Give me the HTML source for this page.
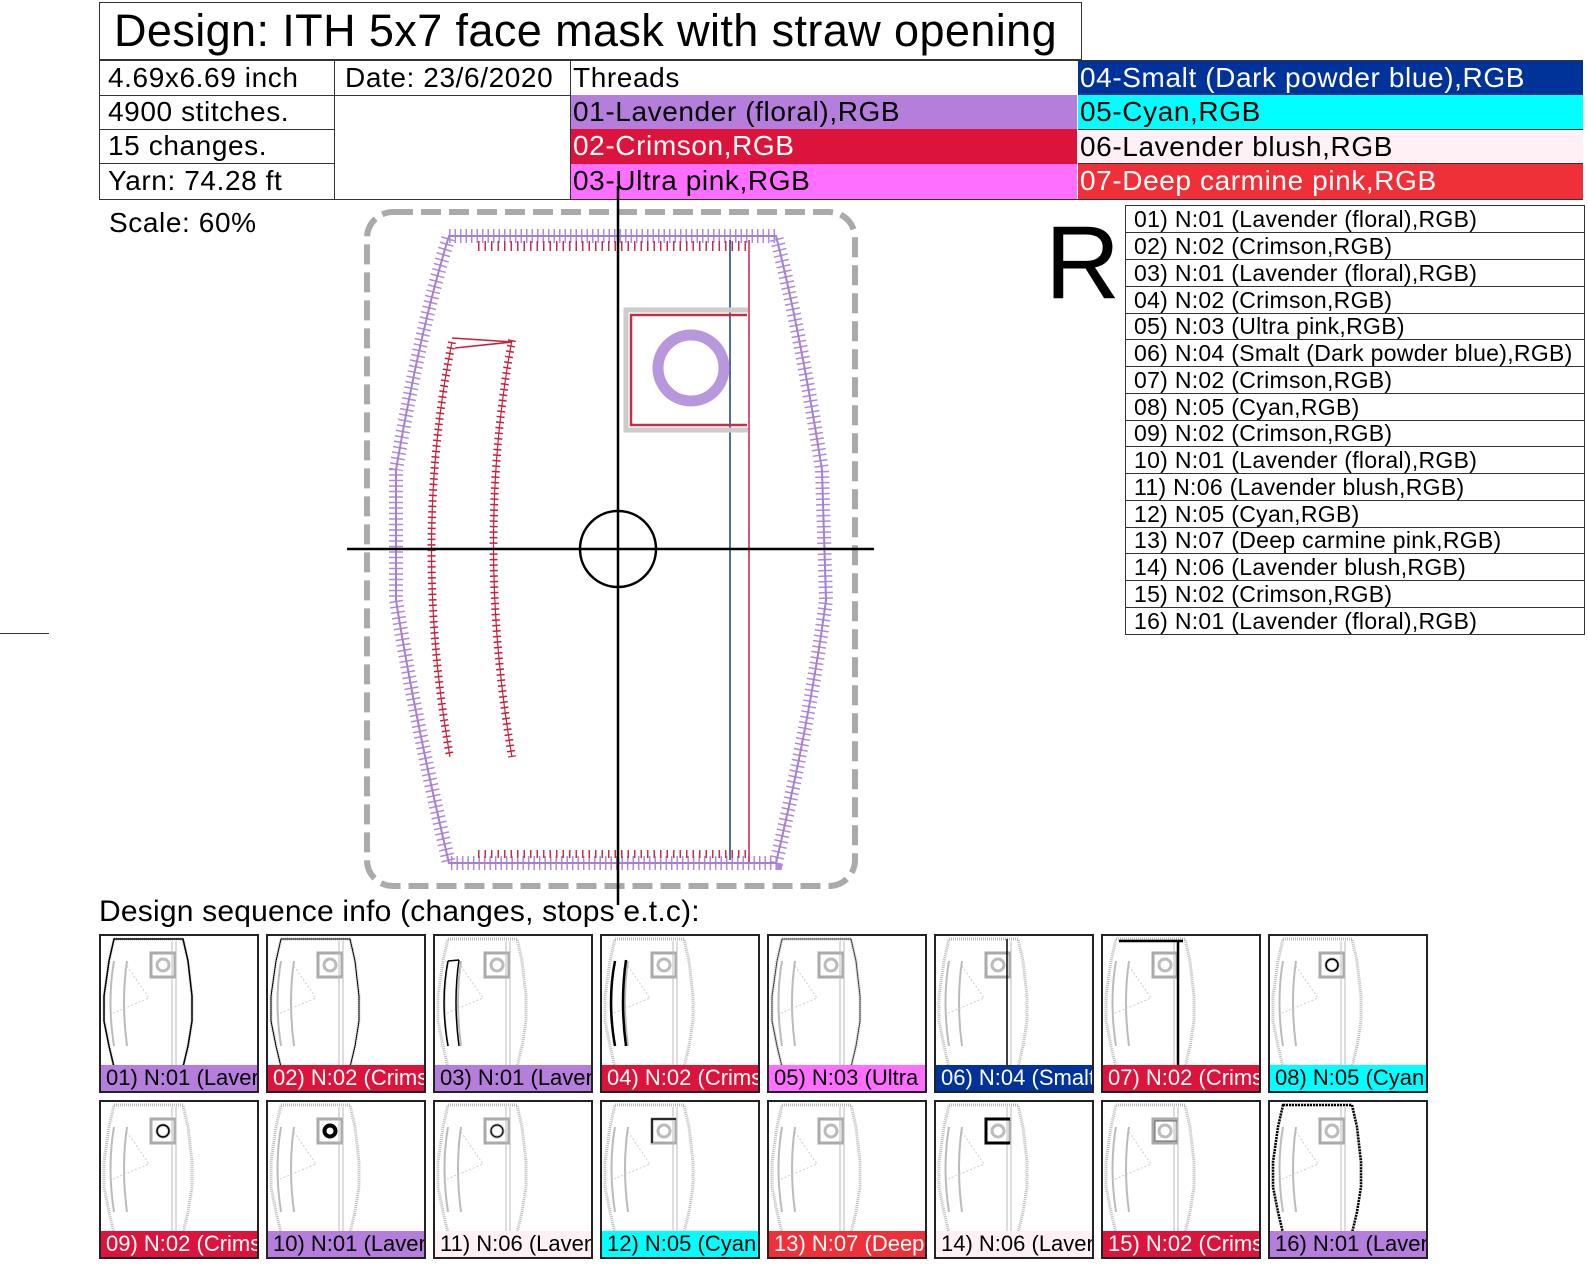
<!DOCTYPE html>
<html><head><meta charset="utf-8"><style>
body{margin:0;width:1588px;height:1270px;background:#fff;position:relative;overflow:hidden;font-family:"Liberation Sans",sans-serif;color:#000}
.a{position:absolute;box-sizing:border-box;white-space:nowrap;overflow:hidden}
.t{font-size:28px;letter-spacing:0.6px;line-height:34px;padding-left:8px}
.l{font-size:23px;letter-spacing:0.3px;line-height:26px;padding-left:8px;border:1px solid #333;border-top:none}
.th{position:absolute;width:160px;height:159px;border:2px solid #222;box-sizing:border-box;overflow:hidden}
.th svg{position:absolute;left:0;top:0}
.th .lb{position:absolute;left:0;bottom:0;width:100%;height:26px;font-size:22px;line-height:26px;padding-left:5px;white-space:nowrap;overflow:hidden;box-sizing:border-box}
</style></head><body>
<div class="a" style="left:99px;top:2px;width:983px;height:58px;border:1px solid #333;font-size:45px;letter-spacing:0.4px;line-height:56px;padding-left:14px">Design: ITH 5x7 face mask with straw opening</div>
<div class="a" style="left:99px;top:60px;width:1484px;height:140px;border:1px solid #333"></div>
<div class="a t" style="left:100px;top:61px;width:234px;border-bottom:1px solid #333">4.69x6.69 inch</div>
<div class="a t" style="left:100px;top:95px;width:234px;border-bottom:1px solid #333">4900 stitches.</div>
<div class="a t" style="left:100px;top:129px;width:234px;border-bottom:1px solid #333">15 changes.</div>
<div class="a t" style="left:100px;top:164px;width:234px">Yarn: 74.28 ft</div>
<div class="a" style="left:334px;top:60px;width:1px;height:140px;background:#333"></div>
<div class="a t" style="left:335px;top:61px;width:235px;border-bottom:1px solid #333;padding-left:10px">Date: 23/6/2020</div>
<div class="a" style="left:570px;top:60px;width:1px;height:140px;background:#333"></div>
<div class="a t" style="left:571px;top:61px;width:506px;padding-left:2px">Threads</div>
<div class="a t" style="left:571px;top:95px;width:506px;height:34px;background:#b57edc;padding-left:2px">01-Lavender (floral),RGB</div>
<div class="a t" style="left:571px;top:129px;width:506px;height:35px;background:#dc143c;color:#fff;padding-left:2px">02-Crimson,RGB</div>
<div class="a t" style="left:571px;top:164px;width:506px;height:35px;background:#ff6fff;padding-left:2px">03-Ultra pink,RGB</div>
<div class="a t" style="left:1078px;top:61px;width:505px;height:34px;background:#003399;color:#fff;padding-left:2px">04-Smalt (Dark powder blue),RGB</div>
<div class="a t" style="left:1078px;top:95px;width:505px;height:34px;background:#00ffff;padding-left:2px">05-Cyan,RGB</div>
<div class="a t" style="left:1078px;top:129px;width:505px;height:35px;background:#fff0f5;border-top:1px solid #333;border-bottom:1px solid #333;padding-left:2px">06-Lavender blush,RGB</div>
<div class="a t" style="left:1078px;top:164px;width:505px;height:35px;background:#ef3038;color:#fff;padding-left:2px">07-Deep carmine pink,RGB</div>
<div class="a" style="left:109px;top:207px;font-size:28px;letter-spacing:0.6px;line-height:32px">Scale: 60%</div>
<div class="a" style="left:1045px;top:208px;font-size:104px;line-height:110px">R</div>
<div class="a" style="left:0;top:633px;width:49px;height:1px;background:#333"></div>

<div class="a" style="left:1125px;top:205px;width:460px;height:1px;background:#333"></div>
<div class="a l" style="left:1125px;top:206px;width:460px">01) N:01 (Lavender (floral),RGB)</div>
<div class="a l" style="left:1125px;top:233px;width:460px">02) N:02 (Crimson,RGB)</div>
<div class="a l" style="left:1125px;top:260px;width:460px">03) N:01 (Lavender (floral),RGB)</div>
<div class="a l" style="left:1125px;top:287px;width:460px">04) N:02 (Crimson,RGB)</div>
<div class="a l" style="left:1125px;top:313px;width:460px">05) N:03 (Ultra pink,RGB)</div>
<div class="a l" style="left:1125px;top:340px;width:460px">06) N:04 (Smalt (Dark powder blue),RGB)</div>
<div class="a l" style="left:1125px;top:367px;width:460px">07) N:02 (Crimson,RGB)</div>
<div class="a l" style="left:1125px;top:394px;width:460px">08) N:05 (Cyan,RGB)</div>
<div class="a l" style="left:1125px;top:420px;width:460px">09) N:02 (Crimson,RGB)</div>
<div class="a l" style="left:1125px;top:447px;width:460px">10) N:01 (Lavender (floral),RGB)</div>
<div class="a l" style="left:1125px;top:474px;width:460px">11) N:06 (Lavender blush,RGB)</div>
<div class="a l" style="left:1125px;top:501px;width:460px">12) N:05 (Cyan,RGB)</div>
<div class="a l" style="left:1125px;top:527px;width:460px">13) N:07 (Deep carmine pink,RGB)</div>
<div class="a l" style="left:1125px;top:554px;width:460px">14) N:06 (Lavender blush,RGB)</div>
<div class="a l" style="left:1125px;top:581px;width:460px">15) N:02 (Crimson,RGB)</div>
<div class="a l" style="left:1125px;top:608px;width:460px">16) N:01 (Lavender (floral),RGB)</div>

<svg class="a" style="left:0;top:0" width="1588" height="1270">
<defs>
<path id="mk" d="M449 236 L776 236 Q800 330 822 470 L826 600 Q810 720 776 863 L449 863 Q415 720 396 600 L396 470 Q420 330 449 236 Z"/>
<path id="c1" d="M452 342 Q412 540 450 757"/>
<path id="c2" d="M512 340 Q475 540 512 757"/>
</defs>
<rect x="367" y="212" width="488" height="674" rx="26" fill="none" stroke="#aaa" stroke-width="6" stroke-dasharray="20 8"/>
<use href="#mk" fill="none" stroke="#b08ad8" stroke-width="14" stroke-dasharray="1.5 4"/>
<use href="#mk" fill="none" stroke="#a57ed6" stroke-width="2" transform="translate(0,0)"/>
<line x1="478" y1="246" x2="748" y2="246" stroke="#c0304a" stroke-width="10" stroke-dasharray="1.5 5"/>
<line x1="478" y1="854" x2="748" y2="854" stroke="#c0304a" stroke-width="8" stroke-dasharray="1.5 5"/>
<line x1="730" y1="240" x2="730" y2="860" stroke="#1a3a8a" stroke-width="1.5"/>
<line x1="749" y1="240" x2="749" y2="862" stroke="#d0204a" stroke-width="1.5"/>
<path d="M748 310 L626 310 L626 430 L748 430" fill="none" stroke="#ccc" stroke-width="5"/>
<path d="M747 315 L631 315 L631 425 L747 425" fill="none" stroke="#c0304a" stroke-width="2.5"/>
<circle cx="691" cy="368" r="33" fill="none" stroke="#b898dc" stroke-width="11"/>
<use href="#c1" fill="none" stroke="#c8203c" stroke-width="8" stroke-dasharray="1.5 4"/>
<use href="#c2" fill="none" stroke="#c8203c" stroke-width="8" stroke-dasharray="1.5 4"/>
<use href="#c1" fill="none" stroke="#c8203c" stroke-width="1.2"/>
<use href="#c2" fill="none" stroke="#c8203c" stroke-width="1.2"/>
<path d="M452 338 L512 342 L455 348" fill="none" stroke="#c8203c" stroke-width="1.5"/>
<line x1="347" y1="549" x2="874" y2="549" stroke="#000" stroke-width="2.5"/>
<line x1="618" y1="186" x2="618" y2="905" stroke="#000" stroke-width="2.5"/>
<circle cx="618" cy="549" r="38" fill="none" stroke="#000" stroke-width="2.5"/>
</svg>

<div class="a" style="left:99px;top:895px;font-size:30px;letter-spacing:0.2px;line-height:34px">Design sequence info (changes, stops e.t.c):</div>

<svg width="0" height="0" style="position:absolute"><defs>
<g id="tm">
<path d="M13 3 L82 3 L87 25 L91 60 L91 85 L87 110 L82 131 L13 131 L8 110 L3 85 L3 60 L8 25 Z" fill="none" stroke="#bbb" stroke-width="3" stroke-dasharray="1 1"/>
<rect x="50" y="17" width="24" height="24" fill="none" stroke="#aaa" stroke-width="3"/>
<circle cx="62" cy="29" r="6" fill="none" stroke="#bbb" stroke-width="3"/>
<line x1="71" y1="5" x2="71" y2="130" stroke="#bbb"/><line x1="75" y1="5" x2="75" y2="130" stroke="#bbb"/>
<path d="M13 25 Q6 65 13 110 M26 25 Q20 65 26 110" fill="none" stroke="#bbb" stroke-width="2"/>
<path d="M26 30 L48 62 L10 78" fill="none" stroke="#ccc" stroke-dasharray="2 2"/>
</g>
<path id="to" d="M13 3 L82 3 L87 25 L91 60 L91 85 L87 110 L82 131 L13 131 L8 110 L3 85 L3 60 L8 25 Z" fill="none"/>
</defs></svg>

<div class="th" style="left:99px;top:934px"><svg width="160" height="135"><use href="#tm"/><use href="#to" stroke="#000" stroke-width="1.5"/></svg><div class="lb" style="background:#b57edc">01) N:01 (Lavender</div></div>
<div class="th" style="left:266px;top:934px"><svg width="160" height="135"><use href="#tm"/><use href="#to" stroke="#000" stroke-width="1"/></svg><div class="lb" style="background:#dc143c;color:#fff">02) N:02 (Crimson</div></div>
<div class="th" style="left:433px;top:934px"><svg width="160" height="135"><use href="#tm"/><path d="M13 25 Q5 65 13 110 M24 24 Q18 65 24 110 M13 25 L24 24" fill="none" stroke="#000" stroke-width="1.5"/></svg><div class="lb" style="background:#b57edc">03) N:01 (Lavender</div></div>
<div class="th" style="left:600px;top:934px"><svg width="160" height="135"><use href="#tm"/><path d="M13 25 Q5 65 13 110 M24 24 Q18 65 24 110" fill="none" stroke="#000" stroke-width="2.5"/></svg><div class="lb" style="background:#dc143c;color:#fff">04) N:02 (Crimson</div></div>
<div class="th" style="left:767px;top:934px"><svg width="160" height="135"><use href="#tm"/><use href="#to" stroke="#444" stroke-width="1"/></svg><div class="lb" style="background:#ff6fff">05) N:03 (Ultra pink</div></div>
<div class="th" style="left:934px;top:934px"><svg width="160" height="135"><use href="#tm"/><line x1="71" y1="3" x2="71" y2="131" stroke="#000" stroke-width="1.5"/></svg><div class="lb" style="background:#003399;color:#fff">06) N:04 (Smalt</div></div>
<div class="th" style="left:1101px;top:934px"><svg width="160" height="135"><use href="#tm"/><path d="M16 5 L80 5 M75 5 L75 131" fill="none" stroke="#000" stroke-width="2.5"/></svg><div class="lb" style="background:#dc143c;color:#fff">07) N:02 (Crimson</div></div>
<div class="th" style="left:1268px;top:934px"><svg width="160" height="135"><use href="#tm"/><circle cx="62" cy="29" r="6" fill="none" stroke="#000" stroke-width="1.5"/></svg><div class="lb" style="background:#00ffff">08) N:05 (Cyan,RGB)</div></div>

<div class="th" style="left:99px;top:1100px"><svg width="160" height="135"><use href="#tm"/><circle cx="62" cy="29" r="6" fill="none" stroke="#000" stroke-width="1.5"/></svg><div class="lb" style="background:#dc143c;color:#fff">09) N:02 (Crimson</div></div>
<div class="th" style="left:266px;top:1100px"><svg width="160" height="135"><use href="#tm"/><circle cx="62" cy="29" r="5.5" fill="none" stroke="#000" stroke-width="4"/></svg><div class="lb" style="background:#b57edc">10) N:01 (Lavender</div></div>
<div class="th" style="left:433px;top:1100px"><svg width="160" height="135"><use href="#tm"/><circle cx="62" cy="29" r="6" fill="none" stroke="#000" stroke-width="1.2"/></svg><div class="lb" style="background:#fff0f5">11) N:06 (Lavender</div></div>
<div class="th" style="left:600px;top:1100px"><svg width="160" height="135"><use href="#tm"/><path d="M74 17 L50 17 L50 41" fill="none" stroke="#000" stroke-width="1.5"/></svg><div class="lb" style="background:#00ffff">12) N:05 (Cyan,RGB)</div></div>
<div class="th" style="left:767px;top:1100px"><svg width="160" height="135"><use href="#tm"/></svg><div class="lb" style="background:#ef3038;color:#fff">13) N:07 (Deep</div></div>
<div class="th" style="left:934px;top:1100px"><svg width="160" height="135"><use href="#tm"/><path d="M74 17 L50 17 L50 41 L74 41" fill="none" stroke="#000" stroke-width="3"/></svg><div class="lb" style="background:#fff0f5">14) N:06 (Lavender</div></div>
<div class="th" style="left:1101px;top:1100px"><svg width="160" height="135"><use href="#tm"/><path d="M74 19 L52 19 L52 39 L74 39" fill="none" stroke="#666" stroke-width="1"/></svg><div class="lb" style="background:#dc143c;color:#fff">15) N:02 (Crimson</div></div>
<div class="th" style="left:1268px;top:1100px"><svg width="160" height="135"><use href="#tm"/><use href="#to" stroke="#000" stroke-width="2.5" stroke-dasharray="2 1"/></svg><div class="lb" style="background:#b57edc">16) N:01 (Lavender</div></div>
</body></html>
